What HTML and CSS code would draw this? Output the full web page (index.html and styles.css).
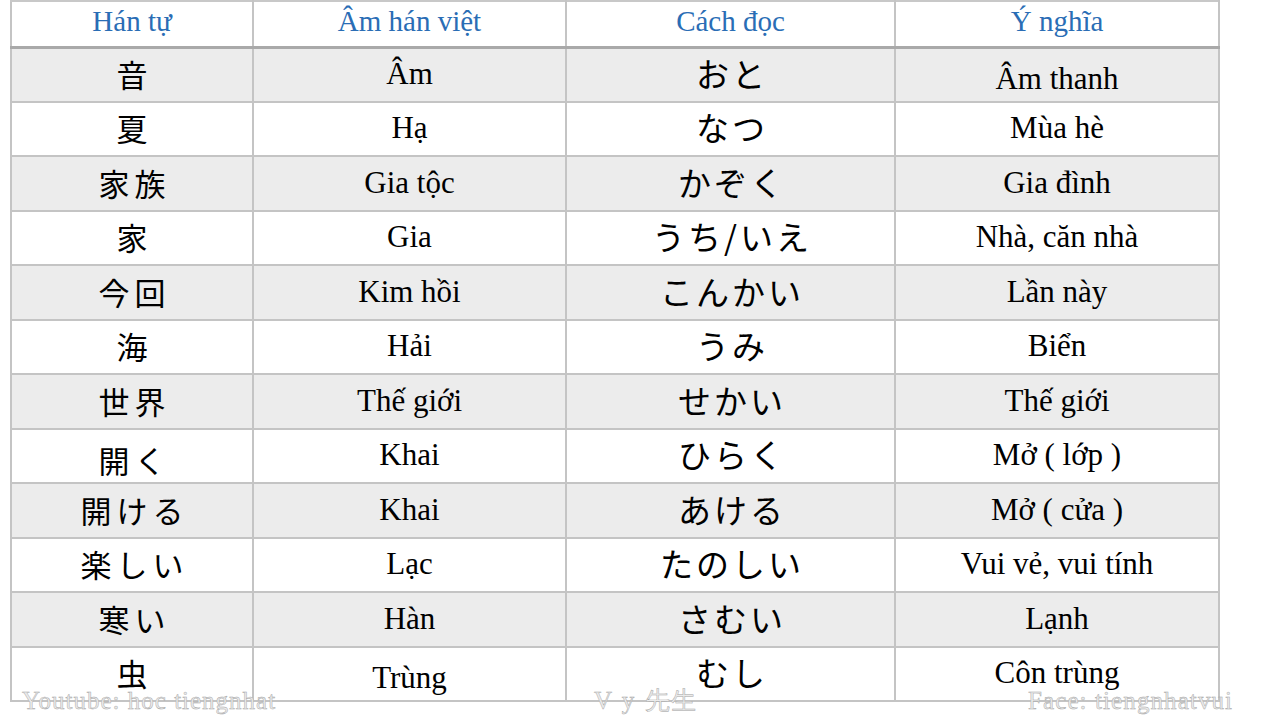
FILE: index.html
```html
<!DOCTYPE html>
<html lang="vi">
<head>
<meta charset="utf-8">
<title>Kanji</title>
<link rel="stylesheet" href="styles.css">
</head>
<body>
<div class="page">
  <table class="vocab">
    <colgroup>
      <col class="c1"><col class="c2"><col class="c3"><col class="c4">
    </colgroup>
    <thead>
      <tr><th>Hán tự</th><th>Âm hán việt</th><th>Cách đọc</th><th>Ý nghĩa</th></tr>
    </thead>
    <tbody>
      <tr><td class="jp k">音</td><td>Âm</td><td class="jp">おと</td><td class="lo">Âm thanh</td></tr>
      <tr><td class="jp k">夏</td><td>Hạ</td><td class="jp">なつ</td><td>Mùa hè</td></tr>
      <tr><td class="jp k">家族</td><td>Gia tộc</td><td class="jp">かぞく</td><td>Gia đình</td></tr>
      <tr><td class="jp k">家</td><td>Gia</td><td class="jp">うち/いえ</td><td>Nhà, căn nhà</td></tr>
      <tr><td class="jp k">今回</td><td>Kim hồi</td><td class="jp">こんかい</td><td>Lần này</td></tr>
      <tr><td class="jp k">海</td><td>Hải</td><td class="jp">うみ</td><td>Biển</td></tr>
      <tr><td class="jp k">世界</td><td>Thế giới</td><td class="jp">せかい</td><td>Thế giới</td></tr>
      <tr><td class="jp k lo">開く</td><td>Khai</td><td class="jp">ひらく</td><td>Mở ( lớp )</td></tr>
      <tr><td class="jp k">開ける</td><td>Khai</td><td class="jp">あける</td><td>Mở ( cửa )</td></tr>
      <tr><td class="jp k">楽しい</td><td>Lạc</td><td class="jp">たのしい</td><td>Vui vẻ, vui tính</td></tr>
      <tr><td class="jp k">寒い</td><td>Hàn</td><td class="jp">さむい</td><td>Lạnh</td></tr>
      <tr><td class="jp k">虫</td><td class="lo">Trùng</td><td class="jp">むし</td><td>Côn trùng</td></tr>
    </tbody>
  </table>
  <div class="mark mark-yt">Youtube: hoc tiengnhat</div>
  <div class="mark mark-vy">V y 先生</div>
  <div class="mark mark-fb">Face: tiengnhatvui</div>
</div>
</body>
</html>
```

FILE: styles.css
```css
html, body {
  margin: 0;
  padding: 0;
  background: #ffffff;
}

.page {
  position: relative;
  width: 1280px;
  height: 720px;
  padding-left: 10px;
  box-sizing: border-box;
  overflow: hidden;
  font-family: "Liberation Serif", "Times New Roman", serif;
}

.vocab {
  border-collapse: collapse;
  table-layout: fixed;
  width: 1208px;
  color: #000;
}

.c1 { width: 242px; }
.c2 { width: 313px; }
.c3 { width: 329px; }
.c4 { width: 324px; }

.vocab th,
.vocab td {
  border: 2px solid #c4c4c4;
  text-align: center;
  vertical-align: middle;
  padding: 0;
}

.vocab thead tr {
  height: 46px;
}

.vocab th {
  font-weight: normal;
  font-size: 29px;
  color: #2a6db5;
  border-top-color: #c8c8c8;
  border-bottom: 3px solid #a9a9a9;
  padding-bottom: 4px;
}

.vocab tbody tr {
  height: 54.5px;
}

.vocab tbody tr:nth-child(odd) td {
  background: #ececec;
}

.vocab td {
  font-size: 31px;
  line-height: 1;
  padding-bottom: 2px;
}

.vocab td.lo {
  padding-top: 8px;
  padding-bottom: 0;
}

.vocab td.jp {
  font-family: "Noto Sans CJK JP", "Noto Sans CJK SC", sans-serif;
  font-size: 33px;
  letter-spacing: 3px;
  padding-left: 3px;
}

.vocab td.k {
  font-size: 31px;
  letter-spacing: 5px;
  padding-left: 5px;
}

.mark {
  position: absolute;
  top: 686px;
  font-family: "Liberation Serif", "Times New Roman", serif;
  font-size: 25px;
  line-height: 30px;
  color: #ebebeb;
  -webkit-text-stroke: 0.45px #a4a4a4;
  white-space: nowrap;
}

.mark-yt {
  left: 22px;
  letter-spacing: 1px;
}

.mark-vy {
  left: 594px;
  letter-spacing: 1px;
  word-spacing: 2px;
}

.mark-fb {
  left: 1028px;
  letter-spacing: 1.1px;
}
```
